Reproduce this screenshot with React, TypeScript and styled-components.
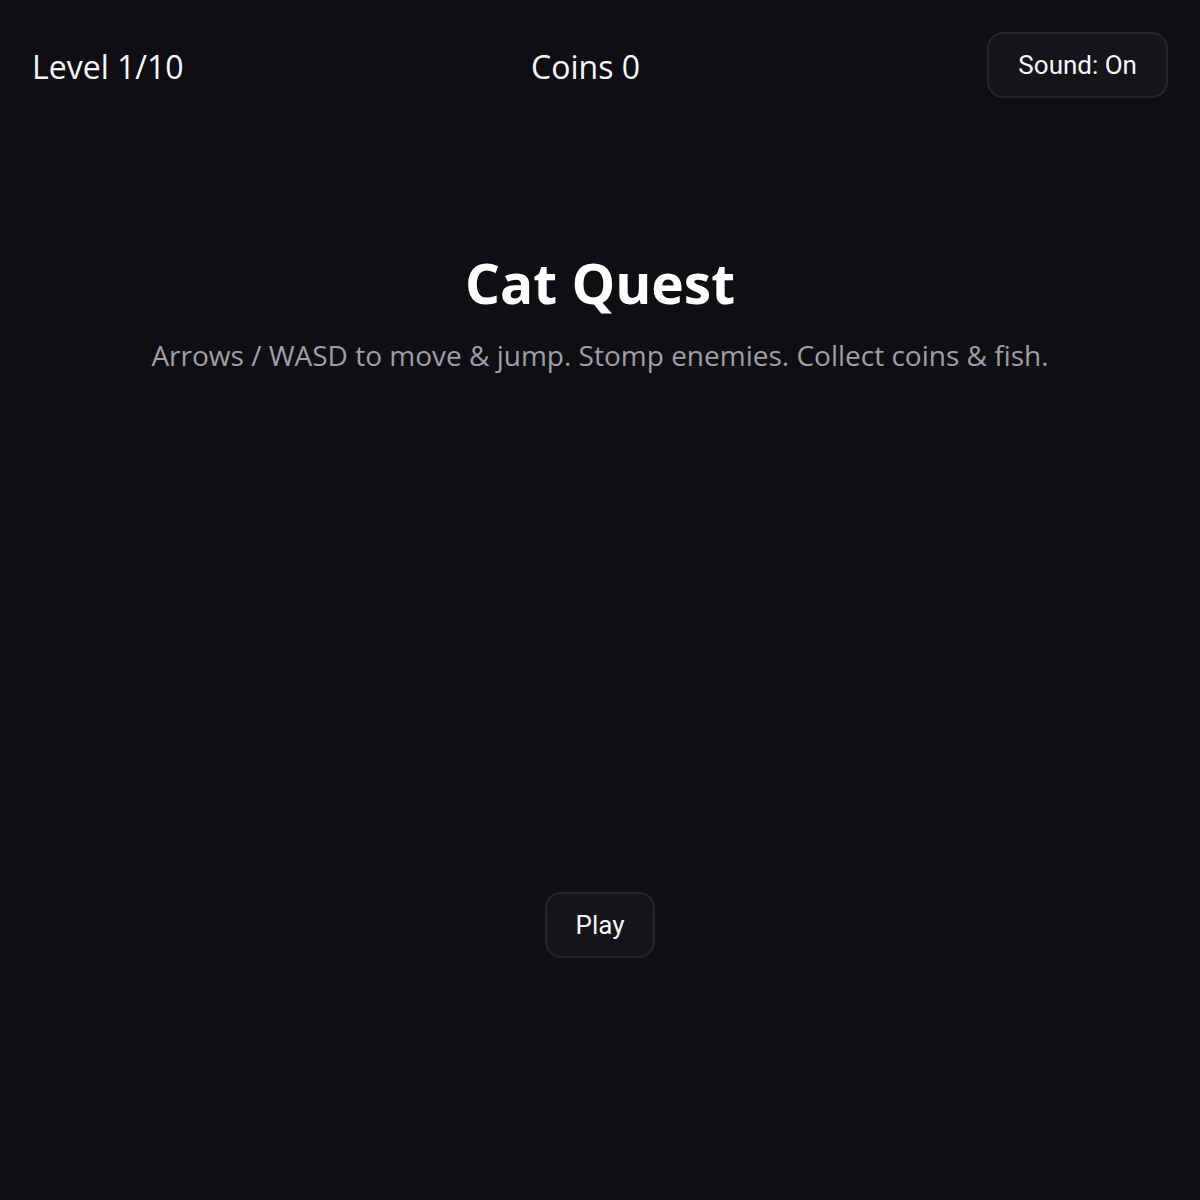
import React, { useState } from "react";
import styled, { createGlobalStyle } from "styled-components";

const Global = createGlobalStyle`
  html, body {
    margin: 0;
    padding: 0;
    background: #0f0e13;
  }
  * { box-sizing: border-box; }
`;

const Page = styled.div`
  min-height: 100vh;
  background: #0f0e13;
  color: #f7f7f9;
  padding: 32px;
  font-family: "Open Sans", "Noto Sans", sans-serif;
`;

const Header = styled.header`
  display: flex;
  justify-content: space-between;
  align-items: center;
`;

const Stat = styled.div`
  font-size: 32px;
  line-height: 1.2;
  color: #f7f7f9;
  padding-top: 4px;
`;

const Button = styled.button`
  font-family: Roboto, "Noto Sans", sans-serif;
  font-size: 26px;
  color: #f7f7f9;
  background: #151419;
  border: 2px solid #26252b;
  border-radius: 16px;
  height: 66px;
  padding: 0 29px;
  cursor: pointer;
`;

const Main = styled.main`
  display: flex;
  flex-direction: column;
  align-items: center;
  padding-top: 152px;
`;

const Title = styled.h1`
  margin: 0;
  font-size: 55px;
  font-weight: 700;
  line-height: 1.2;
  color: #ffffff;
`;

const Subtitle = styled.p`
  margin: 23px 0 0;
  font-size: 28px;
  line-height: 1.2;
  color: #9f9ea7;
`;

const PlayArea = styled.div`
  margin-top: 519px;
`;

export default function App() {
  const [sound, setSound] = useState(true);
  return (
    <>
      <Global />
      <Page>
        <Header>
          <Stat>Level 1/10</Stat>
          <Stat>Coins 0</Stat>
          <Button onClick={() => setSound(!sound)}>Sound: {sound ? "On" : "Off"}</Button>
        </Header>
        <Main>
          <Title>Cat Quest</Title>
          <Subtitle>Arrows / WASD to move &amp; jump. Stomp enemies. Collect coins &amp; fish.</Subtitle>
          <PlayArea>
            <Button>Play</Button>
          </PlayArea>
        </Main>
      </Page>
    </>
  );
}
